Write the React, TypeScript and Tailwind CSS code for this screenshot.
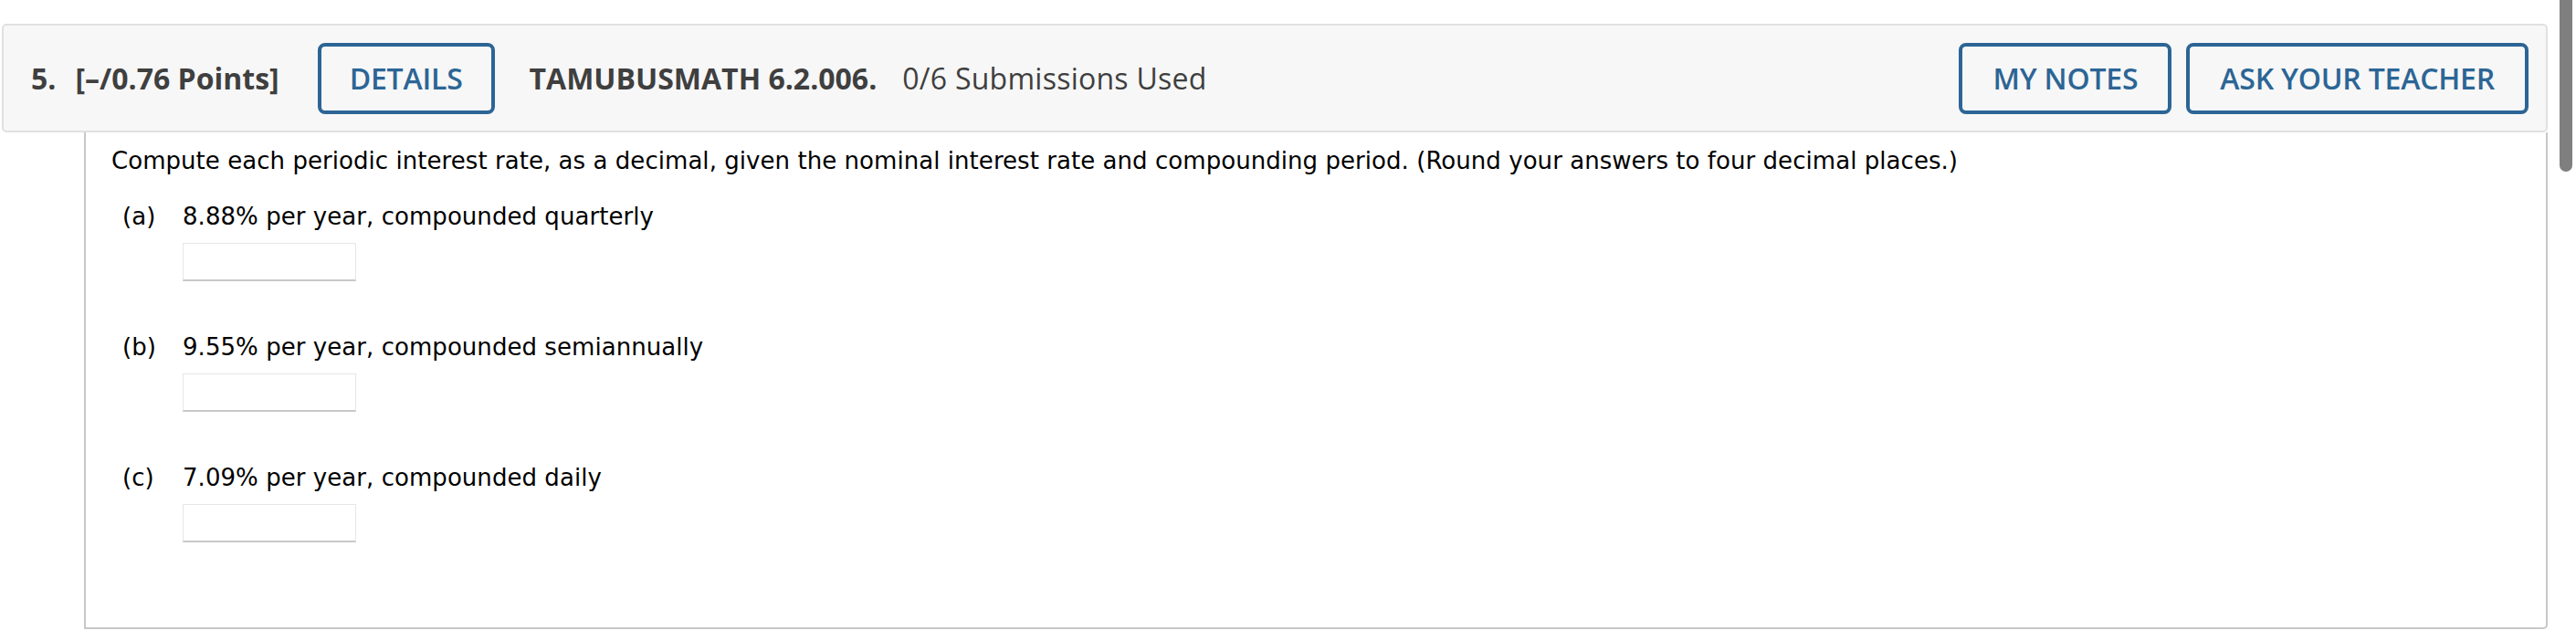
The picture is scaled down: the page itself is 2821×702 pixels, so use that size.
import React from "react";

const parts = [
  { label: "(a)", text: "8.88% per year, compounded quarterly" },
  { label: "(b)", text: "9.55% per year, compounded semiannually" },
  { label: "(c)", text: "7.09% per year, compounded daily" },
];

function OutlineButton({ children, pad = "px-[33px]" }: { children: React.ReactNode; pad?: string }) {
  return (
    <button
      className={`${pad} h-[78px] border-4 border-[#2c6595] rounded-lg text-[32px] font-semibold text-[#2c6595] leading-none tracking-[-0.2px]`}
    >
      {children}
    </button>
  );
}

export default function App() {
  return (
    <div className="relative w-full h-[702px] bg-white overflow-hidden">
      {/* scrollbar thumb */}
      <div className="absolute right-[4px] top-[-10px] w-[14px] h-[198px] rounded-full bg-[#7f7f7f]" />

      <div className="pt-[26px]">
        {/* question header */}
        <div
          className="ml-[2px] w-[2788px] h-[119px] flex items-center bg-[#f7f7f7] border-2 border-[#e0e0e0] rounded-[5px] pl-[30px] pr-[19px] text-[#3f3f3f]"
          style={{ fontFamily: '"Open Sans", sans-serif' }}
        >
          <span className="text-[32px] font-bold">5.</span>
          <span className="ml-[21px] text-[32px] font-bold">[–/0.76 Points]</span>
          <div className="ml-[42px]">
            <OutlineButton pad="px-[31px]">DETAILS</OutlineButton>
          </div>
          <span className="ml-[38px] text-[32px] font-bold">TAMUBUSMATH 6.2.006.</span>
          <span className="ml-[28px] text-[32px] tracking-[0.25px]">0/6 Submissions Used</span>
          <div className="ml-auto flex gap-[16px]">
            <OutlineButton>MY NOTES</OutlineButton>
            <OutlineButton>ASK YOUR TEACHER</OutlineButton>
          </div>
        </div>

        {/* question body */}
        <div
          className="ml-[92px] w-[2698px] h-[544px] border-2 border-t-0 border-[#c8c8c8] rounded-br-[5px] pl-[28px] pt-[13px] text-black text-[26px] leading-[36px] tracking-[0.05px]"
          style={{ fontFamily: '"DejaVu Sans", Verdana, sans-serif' }}
        >
          <p>
            Compute each periodic interest rate, as a decimal, given the nominal interest rate and
            compounding period. (Round your answers to four decimal places.)
          </p>
          <div className="mt-[25px] flex flex-col gap-[54px]">
            {parts.map((p) => (
              <div key={p.label} className="pl-[12px]">
                <div className="flex">
                  <span className="w-[66px]">{p.label}</span>
                  <span>{p.text}</span>
                </div>
                <input
                  type="text"
                  className="mt-[11px] ml-[66px] block w-[190px] h-[42px] border border-[#e6e6e6] border-b-2 border-b-[#c8c8c8] bg-white outline-none"
                />
              </div>
            ))}
          </div>
        </div>
      </div>
    </div>
  );
}
